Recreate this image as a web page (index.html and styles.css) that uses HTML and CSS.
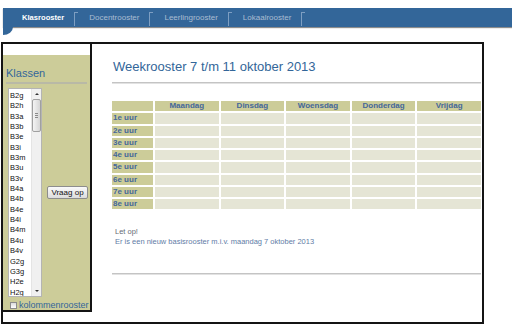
FILE: index.html
```html
<!DOCTYPE html>
<html lang="nl">
<head>
<meta charset="utf-8">
<title>Klasrooster</title>
<link rel="stylesheet" href="styles.css">
</head>
<body>
<nav class="topnav">
  <a class="tab active">Klasrooster</a><span class="sep"></span>
  <a class="tab">Docentrooster</a><span class="sep"></span>
  <a class="tab">Leerlingrooster</a><span class="sep"></span>
  <a class="tab">Lokaalrooster</a><span class="sep"></span>
</nav>
<div class="frame">
  <aside class="panel">
    <div class="panel-top"></div>
    <h2 class="panel-title">Klassen</h2>
    <div class="panel-rule"></div>
    <div class="picker">
      <div class="listbox">
        <ul class="options">
          <li>B2g</li><li>B2h</li><li>B3a</li><li>B3b</li><li>B3e</li>
          <li>B3i</li><li>B3m</li><li>B3u</li><li>B3v</li><li>B4a</li>
          <li>B4b</li><li>B4e</li><li>B4i</li><li>B4m</li><li>B4u</li>
          <li>B4v</li><li>G2g</li><li>G3g</li><li>H2e</li><li>H2g</li>
        </ul>
        <div class="scrollbar">
          <span class="arrow up"></span>
          <span class="thumb"><i></i><i></i><i></i></span>
          <span class="track"></span>
          <span class="arrow down"></span>
        </div>
      </div>
      <button class="btn" type="button">Vraag op</button>
    </div>
    <label class="check"><span class="box"></span>kolommenrooster</label>
  </aside>
  <main class="content">
    <h1 class="title">Weekrooster 7 t/m 11 oktober 2013</h1>
    <div class="rule"></div>
    <div class="rooster">
      <div class="head corner"></div>
      <div class="head">Maandag</div>
      <div class="head">Dinsdag</div>
      <div class="head">Woensdag</div>
      <div class="head">Donderdag</div>
      <div class="head">Vrijdag</div>

      <div class="hour">1e uur</div><div class="cell"></div><div class="cell"></div><div class="cell"></div><div class="cell"></div><div class="cell"></div>
      <div class="hour">2e uur</div><div class="cell"></div><div class="cell"></div><div class="cell"></div><div class="cell"></div><div class="cell"></div>
      <div class="hour">3e uur</div><div class="cell"></div><div class="cell"></div><div class="cell"></div><div class="cell"></div><div class="cell"></div>
      <div class="hour">4e uur</div><div class="cell"></div><div class="cell"></div><div class="cell"></div><div class="cell"></div><div class="cell"></div>
      <div class="hour">5e uur</div><div class="cell"></div><div class="cell"></div><div class="cell"></div><div class="cell"></div><div class="cell"></div>
      <div class="hour">6e uur</div><div class="cell"></div><div class="cell"></div><div class="cell"></div><div class="cell"></div><div class="cell"></div>
      <div class="hour">7e uur</div><div class="cell"></div><div class="cell"></div><div class="cell"></div><div class="cell"></div><div class="cell"></div>
      <div class="hour">8e uur</div><div class="cell"></div><div class="cell"></div><div class="cell"></div><div class="cell"></div><div class="cell"></div>
    </div>
    <p class="note"><span class="note-head">Let op!</span><span class="note-body">Er is een nieuw basisrooster m.i.v. maandag 7 oktober 2013</span></p>
    <div class="rule bottom"></div>
  </main>
</div>
</body>
</html>
```

FILE: styles.css
```css
body {
  margin: 0;
  background: #fff;
  font-family: Arial, "Liberation Sans", sans-serif;
}

/* top navigation */
.topnav {
  position: relative;
  display: flex;
  align-items: center;
  height: 19px;
  margin: 8px 0 0 3px;
  background: #336699;
  box-shadow: 0 1px 1px rgba(0, 0, 0, 0.45);
}
.topnav::before {
  content: "";
  position: absolute;
  left: 0;
  top: 100%;
  width: 10px;
  height: 8px;
  background: #336699;
  border-bottom-right-radius: 10px 8px;
}
.tab {
  font-size: 8px;
  line-height: 19px;
  color: #aabdd2;
  padding: 0 10px 0 11px;
  white-space: nowrap;
}
.tab.active {
  color: #fff;
  font-weight: bold;
  font-size: 7.6px;
  padding-left: 19px;
}
.sep {
  align-self: flex-end;
  width: 3px;
  height: 13px;
  margin-bottom: 1px;
  border-left: 1px solid #7d9ec2;
  border-top: 1px solid #7d9ec2;
}

/* main frame */
.frame {
  display: flex;
  align-items: flex-start;
  box-sizing: border-box;
  width: 483px;
  height: 282px;
  margin: 15px 0 0 1px;
  border: 2px solid #141414;
}

/* left panel */
.panel {
  box-sizing: border-box;
  flex: none;
  width: 91px;
  height: 270px;
  margin: -2px 0 0 -2px;
  border: 2px solid #141414;
  background: #cccc99;
  display: flex;
  flex-direction: column;
}
.panel-top {
  height: 11px;
  background: #fff;
}
.panel-title {
  margin: 0;
  padding: 12px 0 0 3px;
  font-size: 11px;
  line-height: 13px;
  font-weight: normal;
  color: #336699;
}
.panel-rule {
  height: 2px;
  margin: 2px 3px 0 3px;
  background: #b9b9a6;
}
.picker {
  display: flex;
  align-items: center;
  gap: 5px;
  margin-top: 4px;
  padding-left: 5px;
}
.listbox {
  box-sizing: border-box;
  width: 34px;
  height: 209px;
  border: 1px solid #b4b4b4;
  background: #fff;
  display: flex;
}
.options {
  flex: 1;
  margin: 0;
  padding: 2px 0 0 1px;
  list-style: none;
  overflow: hidden;
  font-size: 7.5px;
  line-height: 10.35px;
  color: #111;
}
.scrollbar {
  width: 9px;
  display: flex;
  flex-direction: column;
  background: #f0f0f0;
  border-left: 1px solid #e4e4e4;
}
.arrow {
  height: 10px;
  display: flex;
  align-items: center;
  justify-content: center;
}
.arrow::after {
  content: "";
  border-left: 2px solid transparent;
  border-right: 2px solid transparent;
}
.arrow.up::after {
  border-bottom: 2px solid #333;
}
.arrow.down::after {
  border-top: 2px solid #333;
}
.thumb {
  height: 33px;
  box-sizing: border-box;
  border: 1px solid #a0a0a0;
  border-radius: 2px;
  background: linear-gradient(to right, #f4f4f4, #d6d6d6);
  display: flex;
  flex-direction: column;
  align-items: center;
  justify-content: center;
  gap: 1px;
}
.thumb i {
  display: block;
  width: 3px;
  height: 1px;
  background: #8a8a8a;
}
.track {
  flex: 1;
}
.btn {
  box-sizing: border-box;
  width: 41px;
  height: 13px;
  padding: 0;
  font-family: Arial, "Liberation Sans", sans-serif;
  font-size: 8px;
  line-height: 11px;
  color: #111;
  border: 1px solid #8d8d8d;
  border-radius: 2px;
  background: linear-gradient(#fafafa, #dcdcdc);
}
.check {
  display: flex;
  align-items: center;
  gap: 2px;
  margin: 4px 0 0 7px;
  font-size: 9px;
  line-height: 9px;
  color: #336699;
}
.box {
  box-sizing: border-box;
  width: 7px;
  height: 7px;
  border: 1px solid #8b8b8b;
  background: linear-gradient(#dcdcdc, #fdfdfd);
}

/* content */
.content {
  flex: 1;
  min-width: 0;
  padding: 15px 1px 0 20px;
}
.title {
  margin: 0;
  padding-left: 1px;
  font-size: 13px;
  line-height: 15px;
  font-weight: normal;
  color: #336699;
}
.rule {
  height: 1px;
  margin-top: 8px;
  background: #c4c4c4;
  border-bottom: 1px solid #e2e2e2;
}
.rooster {
  display: grid;
  grid-template-columns: 41px repeat(5, minmax(0, 1fr));
  grid-auto-rows: 10.25px;
  gap: 2px;
  margin-top: 17px;
  font-size: 8px;
  line-height: 10.25px;
  font-weight: bold;
  color: #44679a;
}
.head {
  background: #cccc99;
  text-align: center;
}
.hour {
  background: #cccc99;
  padding-left: 1px;
}
.cell {
  background: #e5e5d5;
}
.note {
  margin: 18px 0 0 0;
  padding-left: 3px;
  font-size: 7.5px;
  line-height: 10px;
  display: flex;
  flex-direction: column;
}
.note-head {
  color: #666b75;
}
.note-body {
  color: #5f7ca6;
}
.rule.bottom {
  margin-top: 26px;
}
```
